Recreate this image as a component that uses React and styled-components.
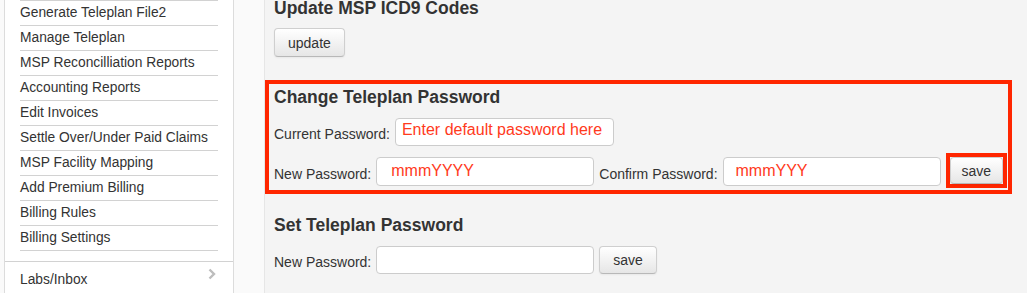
import React from "react";
import styled, { createGlobalStyle } from "styled-components";

const Global = createGlobalStyle`
  html, body { margin: 0; padding: 0; background: #fafafa; }
  body { font-family: "Liberation Sans", Arial, sans-serif; color: #333; overflow: hidden; }
  * { box-sizing: border-box; }
`;

const Page = styled.div`
  display: flex;
  align-items: stretch;
  height: 293px;
  padding-left: 4px;
  background: #fafafa;
`;

const Sidebar = styled.nav`
  width: 230px;
  flex: none;
  background: #fff;
  border-left: 1px solid #dcdcdc;
  border-right: 1px solid #dcdcdc;
`;

const MenuList = styled.ul`
  list-style: none;
  margin: 0 15px 10px 15px;
  padding: 0;
  border-bottom: 1px solid #d2d2d2;
`;

const MenuItem = styled.li`
  border-top: 1px solid #d2d2d2;
  height: 25px;
  line-height: 24px;
  font-size: 13.8px;
  color: #333;
  white-space: nowrap;
`;

const MenuSection = styled.div`
  border-top: 1px solid #d2d2d2;
  display: flex;
  align-items: center;
  justify-content: space-between;
  height: 36px;
  padding: 0 15px 0 15px;
  font-size: 13.8px;
  color: #333;
`;

const Chevron = styled.svg`
  width: 8px;
  height: 12px;
  margin-top: -12px;
  margin-right: 2px;
`;

const Main = styled.main`
  flex: 1;
  margin-left: 30px;
  background: #f4f4f4;
  border-left: 1px solid #e6e6e6;
  display: flex;
  flex-direction: column;
`;

const Section = styled.section`
  padding: 0 0 0 9px;
`;

const Highlight = styled.section`
  margin: 23px 15px 0 0;
  border: 4px solid #ff2600;
  padding: 3px 0 2px 5px;
`;

const Heading = styled.h3`
  margin: ${(p) => p.$mt || 0}px 0 0 0;
  font-size: 17.5px;
  font-weight: bold;
  line-height: ${(p) => p.$lh || 20}px;
  color: #333;
`;

const Button = styled.button`
  font-family: "Liberation Sans", Arial, sans-serif;
  font-size: 14px;
  color: #333;
  height: ${(p) => p.$h || 28}px;
  padding: 0 ${(p) => p.$px || 13}px;
  background: linear-gradient(#ffffff, #e6e6e6);
  border: 1px solid #cfcfcf;
  border-bottom-color: #b8b8b8;
  border-radius: 4px;
  box-shadow: inset 0 1px 0 rgba(255, 255, 255, 0.2), 0 1px 2px rgba(0, 0, 0, 0.05);
  cursor: pointer;
`;

const ButtonRow = styled.div`
  margin-top: 12px;
  display: flex;
`;

const FormRow = styled.div`
  display: flex;
  align-items: center;
  gap: 5px;
  margin-top: ${(p) => p.$mt || 11}px;
`;

const Label = styled.label`
  font-size: 14px;
  color: #333;
  white-space: nowrap;
  padding-top: 4px;
`;

const Input = styled.input`
  width: ${(p) => p.$w || 218}px;
  height: ${(p) => p.$h || 28}px;
  background: #fff;
  border: 1px solid #cccccc;
  border-radius: 4px;
  padding: 0 0 ${(p) => p.$pb || 0}px ${(p) => p.$pl || 6}px;
  font-family: "Liberation Sans", Arial, sans-serif;
  font-size: 16px;
  color: #ff3a1c;
  outline: none;
`;

const SaveHighlight = styled.div`
  border: 4px solid #ff2600;
  display: flex;
  margin-top: -2px;
`;

const items = [
  "Generate Teleplan File2",
  "Manage Teleplan",
  "MSP Reconcilliation Reports",
  "Accounting Reports",
  "Edit Invoices",
  "Settle Over/Under Paid Claims",
  "MSP Facility Mapping",
  "Add Premium Billing",
  "Billing Rules",
  "Billing Settings",
];

export default function App() {
  return (
    <>
      <Global />
      <Page>
        <Sidebar>
          <MenuList>
            {items.map((t) => (
              <MenuItem key={t}>{t}</MenuItem>
            ))}
          </MenuList>
          <MenuSection>
            <span>Labs/Inbox</span>
            <Chevron viewBox="0 0 8 12">
              <path d="M1.5 1.5 L6 6 L1.5 10.5" fill="none" stroke="#bdbdbd" strokeWidth="2.4" />
            </Chevron>
          </MenuSection>
        </Sidebar>
        <Main>
          <Section>
            <Heading $lh={16}>Update MSP ICD9 Codes</Heading>
            <ButtonRow>
              <Button $h={29} $px={13}>update</Button>
            </ButtonRow>
          </Section>
          <Highlight>
            <Heading>Change Teleplan Password</Heading>
            <FormRow>
              <Label>Current Password:</Label>
              <Input $w={219} $pb={4} defaultValue="Enter default password here" readOnly />
            </FormRow>
            <FormRow $mt={9}>
              <Label>New Password:</Label>
              <Input $w={218} $h={29} $pl={14} $pb={2} defaultValue="mmmYYYY" readOnly />
              <Label>Confirm Password:</Label>
              <Input $w={218} $h={29} $pl={12} $pb={2} defaultValue="mmmYYY" readOnly />
              <SaveHighlight>
                <Button $h={27} $px={11}>save</Button>
              </SaveHighlight>
            </FormRow>
          </Highlight>
          <Section>
            <Heading $mt={21}>Set Teleplan Password</Heading>
            <FormRow>
              <Label>New Password:</Label>
              <Input $w={218} />
              <Button $h={28} $px={13}>save</Button>
            </FormRow>
          </Section>
        </Main>
      </Page>
    </>
  );
}
